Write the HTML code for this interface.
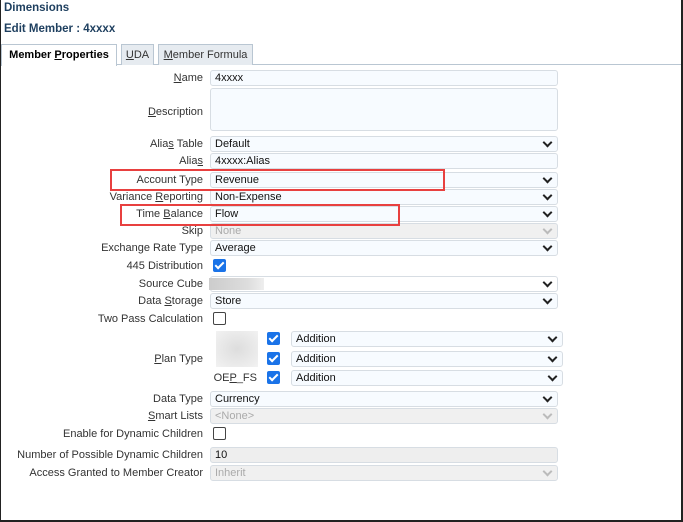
<!DOCTYPE html>
<html><head><style>
*{box-sizing:border-box;margin:0;padding:0}
body{width:683px;height:522px;background:#fff;font-family:"Liberation Sans",sans-serif;font-size:11px;color:#333;position:relative;overflow:hidden}
.frame{position:absolute;left:0;top:0;width:683px;height:522px;border:1px solid #222;border-top:none;border-left:1px solid #222;border-right:2px solid #222;border-bottom:2px solid #222}
.t{position:absolute;font-weight:bold;color:#1e3f5f;font-size:11.5px}
.tab{position:absolute;top:44px;height:21px;border:1px solid #b9c6d2;border-bottom:none;background:#e6ebf0;color:#333;font-size:11px;padding:4px 0 0;white-space:nowrap;text-align:center}
.tab.a{background:#fff;font-weight:bold;color:#000;height:22px}
.line{position:absolute;left:0;right:0;top:64px;height:1px;background:#b9c6d2}
.l{position:absolute;right:480px;text-align:right;white-space:nowrap}
.f{position:absolute;left:210px;width:348px;height:16px;border:1px solid #d7dde3;border-radius:3px;background:#f7fbff;padding:0 4px;line-height:14px;color:#111;white-space:nowrap}
.f.d{background:#f0f0f0;color:#aaa}
.f.n{background:#eee}
.s::after{content:"";position:absolute;right:6px;top:2px;width:5px;height:5px;border-right:2px solid #222;border-bottom:2px solid #222;transform:rotate(45deg)}
.f.d.s::after{border-color:#bbb}
.cb{position:absolute;width:13px;height:13px;border-radius:2px;background:#1a73e8}
.cb::after{content:"";position:absolute;left:4px;top:1px;width:3px;height:7px;border-right:2px solid #fff;border-bottom:2px solid #fff;transform:rotate(45deg)}
.ce{position:absolute;width:13px;height:13px;border:1px solid #444;border-radius:2px;background:#fff}
.red{position:absolute;border:2px solid #e8403f}
u{text-decoration:underline}
</style></head><body>
<div class="t" style="left:4px;top:2px">Dimensions</div>
<div class="t" style="left:4px;top:23px">Edit Member : 4xxxx</div>
<div class="line"></div>
<div class="tab a" style="left:1px;width:116px">Member <u>P</u>roperties</div>
<div class="tab" style="left:121px;width:33px"><u>U</u>DA</div>
<div class="tab" style="left:158px;width:95px"><u>M</u>ember Formula</div>

<div class="l" style="top:72px"><u>N</u>ame</div><div class="f" style="top:70px">4xxxx</div>
<div class="l" style="top:106px"><u>D</u>escription</div><div class="f" style="top:88px;height:43px"></div>
<div class="l" style="top:138px">Alia<u>s</u> Table</div><div class="f s" style="top:136px">Default</div>
<div class="l" style="top:155px">Alia<u>s</u></div><div class="f" style="top:153px">4xxxx:Alias</div>
<div class="l" style="top:174px">Account Type</div><div class="f s" style="top:172px">Revenue</div>
<div class="l" style="top:191px">Variance <u>R</u>eporting</div><div class="f s" style="top:189px">Non-Expense</div>
<div class="l" style="top:208px">Time <u>B</u>alance</div><div class="f s" style="top:206px">Flow</div>
<div class="l" style="top:225px">Skip</div><div class="f d s" style="top:223px">None</div>
<div class="l" style="top:242px">Exchange Rate Type</div><div class="f s" style="top:240px">Average</div>
<div class="l" style="top:260px">445 Distribution</div><div class="cb" style="left:213px;top:259px"></div>
<div class="l" style="top:278px">Source Cube</div><div class="f s" style="top:276px;background:#fff"><span style="position:absolute;left:-2px;top:1px;width:55px;height:12px;background:linear-gradient(90deg,#ccc,#ddd 70%,#eee)"></span></div>
<div class="l" style="top:295px">Data <u>S</u>torage</div><div class="f s" style="top:293px">Store</div>
<div class="l" style="top:313px">Two Pass Calculation</div><div class="ce" style="left:213px;top:312px"></div>
<div style="position:absolute;left:216px;top:331px;width:42px;height:36px;background:radial-gradient(#ddd,#f2f2f2)"></div>
<div class="l" style="top:353px"><u>P</u>lan Type</div>
<div class="l" style="top:372px;right:426px">OE<u>P</u>_FS</div>
<div class="cb" style="left:267px;top:332px"></div><div class="f s" style="top:331px;left:291px;width:272px">Addition</div>
<div class="cb" style="left:267px;top:352px"></div><div class="f s" style="top:351px;left:291px;width:272px">Addition</div>
<div class="cb" style="left:267px;top:371px"></div><div class="f s" style="top:370px;left:291px;width:272px">Addition</div>
<div class="l" style="top:393px">Data Type</div><div class="f s" style="top:391px">Currency</div>
<div class="l" style="top:410px"><u>S</u>mart Lists</div><div class="f d s" style="top:408px">&lt;None&gt;</div>
<div class="l" style="top:428px">Enable for Dynamic Children</div><div class="ce" style="left:213px;top:427px"></div>
<div class="l" style="top:449px">Number of Possible Dynamic Children</div><div class="f n" style="top:447px">10</div>
<div class="l" style="top:467px">Access Granted to Member Creator</div><div class="f d s" style="top:465px">Inherit</div>

<div class="red" style="left:110px;top:169px;width:335px;height:22px"></div>
<div class="red" style="left:120px;top:204px;width:280px;height:22px"></div>
<div class="frame"></div>
</body></html>
